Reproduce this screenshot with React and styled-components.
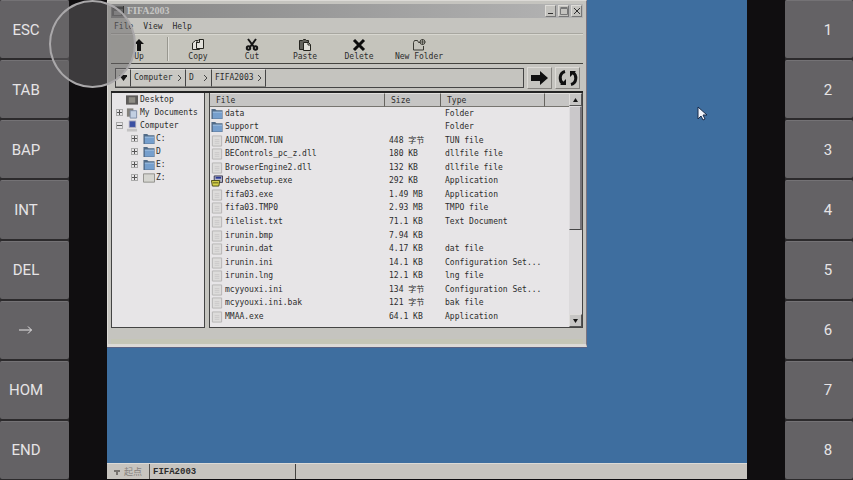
import React from "react";
import styled, { createGlobalStyle } from "styled-components";

const mono = '"DejaVu Sans Mono", "Liberation Mono", "Noto Sans CJK SC", monospace';

const GlobalStyle = createGlobalStyle`
  * { box-sizing: border-box; }
  body { margin: 0; background: #100e10; overflow: hidden; }
  button { margin: 0; padding: 0; border: 0; background: none; font: inherit; color: inherit; }
`;

const Screen = styled.main`
  display: grid;
  grid-template-columns: 69px 1fr 68px;
  height: 100vh;
  background: #100e10;
  position: relative;
`;

const KeyRail = styled.nav`
  display: grid;
  grid-auto-rows: 1fr;
  row-gap: 2px;
  background: #2c2a2c;
  padding-bottom: 1px;
`;

const Key = styled.button`
  background: #646265;
  border: solid #747275;
  border-width: 1px 0 0 0;
  border-radius: 2px;
  color: #e6e4e6;
  font: 15px Roboto, "Noto Sans CJK SC", sans-serif;
  padding-left: ${(p) => (p.$side === "right" ? 18 : 0)}px;
  padding-right: ${(p) => (p.$side === "left" ? 17 : 0)}px;
`;

const Desktop = styled.section`
  margin: 0 38px;
  min-width: 0;
  height: calc(100vh - 1px);
  display: flex;
  flex-direction: column;
  justify-content: space-between;
  background: #3e6e9f;
  font: 8px/12px ${mono};
  color: #2c2c2c;
  position: relative;
`;

const Window = styled.article`
  width: 75%;
  padding: 3px 3px 0;
  background: #c5c4bf;
  border: solid #dcdad6;
  border-width: 1px 1px 3px 1px;
  border-right-color: #7a7480;
  box-shadow: 0 1px 0 #5b6484;
`;

const TitleBar = styled.header`
  height: 14px;
  display: flex;
  align-items: center;
  gap: 3px;
  padding: 0 1px;
  background: linear-gradient(90deg, #858585, #b4b4b4);
  color: #c6c6c4;
  font: bold 10px/12px "Liberation Serif", serif;
`;

const Title = styled.h1`
  margin: 0;
  flex: 1;
  font: inherit;
`;

const CaptionButton = styled.button`
  width: 11px;
  height: 12px;
  margin-left: -1px;
  display: grid;
  place-items: center;
  color: #303030;
  background: #c4c3bf;
  border: 1px solid #dedcd8;
  border-right-color: #777;
  border-bottom-color: #777;
`;

const MenuBar = styled.nav`
  height: 16px;
  display: flex;
  align-items: center;
  gap: 10px;
  padding: 2px 0 0 3px;
  border-bottom: 1px solid #a8a7a0;
`;

const Toolbar = styled.div`
  height: 29px;
  display: flex;
  border-top: 1px solid #d8d7d0;
  background: #c5c4bc;
`;

const Tool = styled.button`
  width: ${(p) => p.$width}px;
  display: flex;
  flex-direction: column;
  align-items: center;
  padding-top: 3px;
  line-height: 10px;
  svg { flex: none; }
`;

const Separator = styled.span`
  width: 2px;
  margin: 2px 0;
  border-left: 1px solid #98978f;
  border-right: 1px solid #dddcd6;
`;

const AddressBar = styled.div`
  height: 30px;
  display: flex;
  align-items: center;
  gap: 3px;
  padding: 0 3px 0 4px;
  border-top: 1px solid #44433f;
  border-bottom: 2px solid #242424;
`;

const Path = styled.div`
  flex: 1;
  height: 20px;
  display: flex;
  border: 1px solid #454545;
`;

const Crumb = styled.button`
  width: ${(p) => p.$width}px;
  display: flex;
  align-items: center;
  justify-content: space-between;
  padding: 0 3px;
  background: #c9c8c3;
  border-top: 1px solid #e2e0dc;
  border-right: 1px solid #454545;
  border-bottom: 1px solid #8a8984;
`;

const GoButton = styled.button`
  width: 25px;
  height: 22px;
  display: grid;
  place-items: center;
  border: 1px solid #dddbd7;
  border-right-color: #85837f;
  border-bottom-color: #85837f;
  color: #101010;
`;

const Panes = styled.div`
  height: 235px;
  display: grid;
  grid-template-columns: 94px 1fr;
  column-gap: 4px;
`;

const Tree = styled.ul`
  margin: 0;
  padding: 0 0 0 4px;
  list-style: none;
  background: #e7e5e7;
  border: 1px solid #444;
  border-top: 0;
  display: grid;
  height: 235px;
  grid-auto-rows: 13px;
  align-content: start;
`;

const TreeItem = styled.li`
  display: flex;
  align-items: center;
  gap: ${(p) => (p.$depth ? 5 : 3)}px;
  padding-left: ${(p) => (p.$depth ? 15 : 0)}px;
  white-space: nowrap;
  span { margin-left: ${(p) => (p.$depth ? -4 : -1)}px; }
`;

const Expander = styled.button`
  flex: none;
  width: 7px;
  height: 7px;
  display: grid;
  place-items: center;
  border: 1px solid ${(p) => (p.$blank ? "transparent" : "#aaaaaa")};
`;

const ListPane = styled.div`
  min-width: 0;
  display: grid;
  grid-template-columns: 1fr 13px;
  background: #e7e5e7;
  border: 1px solid #444;
  border-top: 0;
  overflow: hidden;
`;

const Files = styled.table`
  display: block;
  min-width: 0;
  height: 234px;
  overflow: hidden;
  thead, tbody { display: grid; }
  thead { grid-auto-rows: 13px; }
  tbody { height: 231px; padding-top: 1px; grid-auto-rows: 1fr; }
`;

const Row = styled.tr`
  display: grid;
  grid-template-columns: 1fr 56px 104px 24px;
`;

const Head = styled.th`
  padding: 1px 0 0 6px;
  text-align: left;
  font-weight: normal;
  background: #c6c5c4;
  border-right: 1px solid #66645f;
  border-top: 1px solid #e0dedc;
  border-bottom: 1px solid #777570;
  line-height: 11px;
  &:last-child { border-right: 0; }
`;

const Cell = styled.td`
  padding: 0 0 0 ${(p) => (p.$named ? 1 : 4)}px;
  display: flex;
  align-items: center;
  gap: 2px;
  min-width: 0;
  white-space: pre;
  line-height: 12px;
`;

const ScrollBar = styled.div`
  display: flex;
  flex-direction: column;
  background: #dcdadc;
`;

const ScrollButton = styled.button`
  height: 13px;
  display: grid;
  place-items: center;
  background: #c6c5c4;
  border: 1px solid #dedcda;
  border-right-color: #555;
  border-bottom-color: #555;
`;

const Thumb = styled.div`
  height: 124px;
  margin-bottom: auto;
  background: #cac8ca;
  border: 1px solid #dedcde;
  border-right: 2px solid #77757a;
  border-bottom: 1px solid #444;
`;

const StatusBar = styled.footer`
  height: 16px;
  border-bottom: 5px solid #c5c6b6;
`;

const Taskbar = styled.footer`
  height: 16px;
  display: flex;
  background: #c7c4bf;
  border-top: 1px solid #dcdad6;
`;

const StartButton = styled.button`
  width: 43px;
  display: flex;
  align-items: center;
  justify-content: center;
  gap: 4px;
  color: #86827e;
  font-size: 9px;
  border-right: 1px solid #55524f;
`;

const TaskButton = styled.button`
  width: 146px;
  padding-left: 3px;
  text-align: left;
  border-right: 1px solid #44423f;
  font: bold 9px/12px "Liberation Mono", monospace;
`;

const TouchRing = styled.div`
  position: absolute;
  left: 49px;
  top: 0;
  width: 87px;
  height: 88px;
  border: 2px solid #aaa8aa;
  border-radius: 50%;
  background: rgba(104, 102, 104, 0.5);
  pointer-events: none;
`;

const Pointer = styled.svg`
  position: absolute;
  left: 590px;
  top: 106px;
`;

const IconSvg = styled.svg`
  flex: none;
`;

const toolArt = {
  up: <path d="M7 1 2 6h3v7h4V6h3z" fill="#111" />,
  copy: (
    <g fill="#e2e1db" stroke="#25251f">
      <path d="M1.5 5 4.500 2.500h4v9h-7z" />
      <path d="M5.500 4 8 1.500h4.500v9h-7z" />
      <path d="M5.500 4.500h3V1.500" fill="none" />
    </g>
  ),
  cut: (
    <g fill="none" stroke="#151515" strokeWidth="2">
      <path d="m3 1 6 8M11 1 5 9" />
      <circle cx="3.500" cy="10" r="1.700" />
      <circle cx="10.500" cy="10" r="1.700" />
    </g>
  ),
  paste: (
    <g stroke="#25251f">
      <path d="M1.500 2.500h3l1-1h2l1 1h2v9h-9z" fill="#62625c" />
      <path d="M5.500 4.500h5l2 2v6h-7z" fill="#e2e1db" />
      <path d="M10 4.500V7h2.500" fill="none" />
    </g>
  ),
  remove: <path d="m2 2 10 10M12 2 2 12" stroke="#0c0c0c" strokeWidth="3" />,
  folder: (
    <g fill="none" stroke="#3b3b34">
      <path d="M8 4.500H6.500l-1-2h-3l-1 2v7.500h10V8" />
      <circle cx="10.500" cy="4" r="2.500" />
      <path d="M10.500 1v6M7.500 4h6" strokeWidth=".8" />
    </g>
  ),
};

const tools = [
  ["Up", "up", 56],
  ["Copy", "copy", 58],
  ["Cut", "cut", 50],
  ["Paste", "paste", 56],
  ["Delete", "remove", 52],
  ["New Folder", "folder", 68],
];

const Glyph = ({ kind }) => (
  <IconSvg width="12" height="12" viewBox="0 0 13 12" aria-hidden="true">
    {kind === "folder" && (
      <>
        <path d="M.5 11.500V.5h4L6 2h6.500v9.500z" fill="#526b87" />
        <path d="M2 3.500h10V11H2z" fill="#769fcd" />
        <path d="M2 4h10" stroke="#a4c2e2" />
      </>
    )}
    {kind === "file" && (
      <>
        <path d="M1.500 .5h10v11h-10z" fill="#dddcdb" stroke="#b5b3b3" />
        <path d="M4 4.500h5M4 6.500h5M4 8.500h5" stroke="#cbc9c9" />
      </>
    )}
    {kind === "setup" && (
      <>
        <path d="M3.500 .5h9v7h-9z" fill="#b7b9cc" stroke="#34344c" />
        <path d="M5 2.500h6" stroke="#2a3998" strokeWidth="2" />
        <path d="M.5 5.500h9l-1 6h-7z" fill="#d6d24a" stroke="#454510" />
        <path d="M2 8h6" stroke="#555518" />
      </>
    )}
    {kind === "desktop" && (
      <>
        <path d="M0 1h13v10H0z" fill="#5d5b59" />
        <path d="M3 3h7v6H3z" fill="#8f8d85" />
      </>
    )}
    {kind === "documents" && (
      <>
        <path d="M1 1h7v9H1z" fill="#85827c" />
        <path d="M4.500 3.500h7v8h-7z" fill="#c2cfe2" stroke="#7d8ca6" />
      </>
    )}
    {kind === "computer" && (
      <>
        <path d="M3 0h8v8H3z" fill="#aaa9bc" />
        <path d="M4 1h6v6H4z" fill="#3b50a3" />
        <path d="M1 9h11v3H1z" fill="#c4c3c4" />
      </>
    )}
    {kind === "drive" && <path d="M.5 1.500h12v9H.5z" fill="#d5d5d0" stroke="#8d8c88" />}
  </IconSvg>
);

const tree = [
  ["Desktop", "desktop", 0, ""],
  ["My Documents", "documents", 0, "+"],
  ["Computer", "computer", 0, "-"],
  ["C:", "folder", 1, "+"],
  ["D", "folder", 1, "+"],
  ["E:", "folder", 1, "+"],
  ["Z:", "drive", 1, "+"],
];

const files = [
  ["data", "", "Folder", "folder"],
  ["Support", "", "Folder", "folder"],
  ["AUDTNCOM.TUN", "448 字节", "TUN file"],
  ["BEControls_pc_z.dll", "180 KB", "dllfile file"],
  ["BrowserEngine2.dll", "132 KB", "dllfile file"],
  ["dxwebsetup.exe", "292 KB", "Application", "setup"],
  ["fifa03.exe", "1.49 MB", "Application"],
  ["fifa03.TMP0", "2.93 MB", "TMPO file"],
  ["filelist.txt", "71.1 KB", "Text Document"],
  ["irunin.bmp", "7.94 KB", ""],
  ["irunin.dat", "4.17 KB", "dat file"],
  ["irunin.ini", "14.1 KB", "Configuration Set..."],
  ["irunin.lng", "12.1 KB", "lng file"],
  ["mcyyouxi.ini", "134 字节", "Configuration Set..."],
  ["mcyyouxi.ini.bak", "121 字节", "bak file"],
  ["MMAA.exe", "64.1 KB", "Application"],
];

const leftKeys = ["ESC", "TAB", "BAP", "INT", "DEL", "→", "HOM", "END"];
const rightKeys = ["1", "2", "3", "4", "5", "6", "7", "8"];

const ArrowIcon = () => (
  <svg width="14" height="10" viewBox="0 0 14 10" aria-hidden="true">
    <path d="M0 5h12.500M9 1.500 12.500 5 9 8.500" fill="none" stroke="currentColor" />
  </svg>
);

const Chevron = () => (
  <svg width="5" height="8" viewBox="0 0 5 8" aria-hidden="true">
    <path d="m1 1 3 3-3 3" fill="none" stroke="#444" />
  </svg>
);

const Triangle = ({ down }) => (
  <svg width="5" height="4" viewBox="0 0 5 4" aria-hidden="true">
    <path d={down ? "M0 0h5L2.500 4z" : "M0 4h5L2.500 0z"} fill="#151515" />
  </svg>
);

export default function App() {
  return (
    <Screen>
      <GlobalStyle />
      <KeyRail aria-label="Function keys">
        {leftKeys.map((k) => (
          <Key key={k} $side="left" aria-label={k === "→" ? "Right arrow" : undefined}>
            {k === "→" ? <ArrowIcon /> : k}
          </Key>
        ))}
      </KeyRail>

      <Desktop>
        <Window>
          <TitleBar>
            <svg width="12" height="12" viewBox="0 0 12 12" aria-hidden="true">
              <path d="M0 1h12v10H0z" fill="#636363" />
              <path d="M1 3h10M11.500 1v7" stroke="#333" />
              <path d="M2 6h7v4H2z" fill="#999" />
            </svg>
            <Title>FIFA2003</Title>
            <CaptionButton aria-label="Minimize">
              <svg width="8" height="8"><path d="M1 6.500h5" stroke="currentColor" /></svg>
            </CaptionButton>
            <CaptionButton aria-label="Maximize">
              <svg width="8" height="8"><path d="M.5 1.500h7v6h-7zM.5 .5h7" fill="none" stroke="#777" /></svg>
            </CaptionButton>
            <CaptionButton aria-label="Close">
              <svg width="8" height="8"><path d="m1 1 6 6M7 1 1 7" stroke="currentColor" /></svg>
            </CaptionButton>
          </TitleBar>

          <MenuBar>
            <button>File</button>
            <button>View</button>
            <button>Help</button>
          </MenuBar>

          <Toolbar>
            {tools.map(([label, art, width], i) => (
              <React.Fragment key={label}>
                <Tool $width={width}>
                  <svg width="14" height="14" viewBox="0 0 14 14" aria-hidden="true">{toolArt[art]}</svg>
                  {label}
                </Tool>
                {i === 0 && <Separator />}
              </React.Fragment>
            ))}
          </Toolbar>

          <AddressBar>
            <Path>
              <Crumb $width={15} aria-label="Locations">
                <svg width="9" height="6"><path d="M0 0h9L4.500 6z" fill="#151515" /></svg>
              </Crumb>
              <Crumb $width={55}>Computer<Chevron /></Crumb>
              <Crumb $width={26}>D<Chevron /></Crumb>
              <Crumb $width={54}>FIFA2003<Chevron /></Crumb>
            </Path>
            <GoButton aria-label="Go">
              <svg width="19" height="16" viewBox="0 0 19 16"><path d="M1 5h9V1l8 7-8 7v-4H1z" fill="currentColor" /></svg>
            </GoButton>
            <GoButton aria-label="Refresh">
              <svg width="20" height="18" viewBox="0 0 20 18" fill="none" stroke="currentColor" strokeWidth="3">
                <path d="M7 2.500C1 4 1 12 5 14.500M13 15.500c6-1.500 6-9.500 2-12" />
                <path d="M2 16h6v-6zM18 2h-6v6z" fill="currentColor" stroke="none" />
              </svg>
            </GoButton>
          </AddressBar>

          <Panes>
            <Tree>
              {tree.map(([name, icon, depth, mark]) => (
                <TreeItem key={name} $depth={depth}>
                  <Expander $blank={!mark} aria-label={`Toggle ${name}`}>
                    {mark && (
                      <svg width="5" height="5"><path d={mark === "+" ? "M0 2.500h5M2.500 0v5" : "M0 2.500h5"} stroke="#555" /></svg>
                    )}
                  </Expander>
                  <Glyph kind={icon} />
                  <span>{name}</span>
                </TreeItem>
              ))}
            </Tree>

            <ListPane>
              <Files>
                <thead>
                  <Row><Head>File</Head><Head>Size</Head><Head>Type</Head><Head aria-label="More" /></Row>
                </thead>
                <tbody>
                  {files.map(([name, size, type, icon = "file"]) => (
                    <Row key={name}>
                      <Cell $named><Glyph kind={icon} />{name}</Cell>
                      <Cell>{size}</Cell>
                      <Cell>{type}</Cell>
                    </Row>
                  ))}
                  <Row aria-hidden="true"><Cell /></Row>
                </tbody>
              </Files>
              <ScrollBar>
                <ScrollButton aria-label="Scroll up"><Triangle /></ScrollButton>
                <Thumb />
                <ScrollButton aria-label="Scroll down"><Triangle down /></ScrollButton>
              </ScrollBar>
            </ListPane>
          </Panes>
          <StatusBar />
        </Window>

        <Taskbar>
          <StartButton>
            <svg width="6" height="7"><path d="M0 2h6v2H4v3H2V4H0z" fill="#77736f" /></svg>
            起点
          </StartButton>
          <TaskButton>FIFA2003</TaskButton>
        </Taskbar>

        <Pointer width="10" height="16" viewBox="0 0 10 16" aria-hidden="true">
          <path d="M1 1v12l3-3 2 4 2-1-2-4h4z" fill="#f2f4fa" stroke="#182a48" />
        </Pointer>
      </Desktop>

      <KeyRail aria-label="Number keys">
        {rightKeys.map((k) => <Key key={k} $side="right">{k}</Key>)}
      </KeyRail>
      <TouchRing />
    </Screen>
  );
}
